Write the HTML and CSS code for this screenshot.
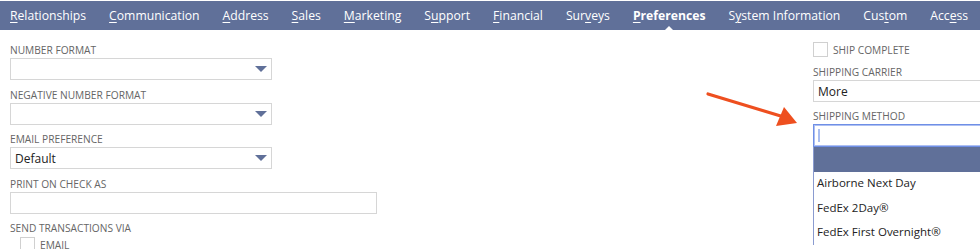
FILE: index.html
```html
<!DOCTYPE html>
<html>
<head>
<meta charset="utf-8">
<link rel="stylesheet" href="styles.css">
</head>
<body>
<nav class="tabs">
  <span class="tab"><u>R</u>elationships</span>
  <span class="tab"><u>C</u>ommunication</span>
  <span class="tab"><u>A</u>ddress</span>
  <span class="tab"><u>S</u>ales</span>
  <span class="tab"><u>M</u>arketing</span>
  <span class="tab">S<u>u</u>pport</span>
  <span class="tab"><u>F</u>inancial</span>
  <span class="tab">Sur<u>v</u>eys</span>
  <span class="tab active"><u>P</u>references</span>
  <span class="tab">S<u>y</u>stem Information</span>
  <span class="tab">Cus<u>t</u>om</span>
  <span class="tab">Acc<u>e</u>ss</span>
</nav>
<main class="content">
  <section class="col-left">
    <div class="field">
      <div class="label">NUMBER FORMAT</div>
      <div class="select"><span class="value"></span><span class="caret"></span></div>
    </div>
    <div class="field">
      <div class="label">NEGATIVE NUMBER FORMAT</div>
      <div class="select"><span class="value"></span><span class="caret"></span></div>
    </div>
    <div class="field">
      <div class="label">EMAIL PREFERENCE</div>
      <div class="select"><span class="value">Default</span><span class="caret"></span></div>
    </div>
    <div class="field">
      <div class="label">PRINT ON CHECK AS</div>
      <div class="textbox"></div>
    </div>
    <div class="field">
      <div class="label">SEND TRANSACTIONS VIA</div>
      <div class="check-row indent"><span class="checkbox"></span><span class="label">EMAIL</span></div>
    </div>
  </section>
  <section class="col-right">
    <div class="check-row"><span class="checkbox"></span><span class="label">SHIP COMPLETE</span></div>
    <div class="field rfield">
      <div class="label">SHIPPING CARRIER</div>
      <div class="select wide"><span class="value">More</span></div>
    </div>
    <div class="field rfield2">
      <div class="label">SHIPPING METHOD</div>
      <div class="input-focus"><span class="cursor"></span></div>
      <div class="dropdown">
        <div class="dd-head"></div>
        <div class="dd-item first">Airborne Next Day</div>
        <div class="dd-item">FedEx 2Day®</div>
        <div class="dd-item">FedEx First Overnight®</div>
      </div>
    </div>
  </section>
  <svg class="arrow" width="100" height="40" viewBox="0 0 100 40">
    <line x1="2" y1="5" x2="78" y2="28" stroke="#ee4f1f" stroke-width="3.2" stroke-linecap="round"/>
    <polygon points="91,34 70,37 78,18" fill="#ee4f1f"/>
  </svg>
</main>
</body>
</html>
```
FILE: styles.css
```css
html, body {
  margin: 0;
  padding: 0;
  background: #fff;
  overflow: hidden;
  width: 980px;
  height: 249px;
  font-family: "Open Sans", "Liberation Sans", sans-serif;
}
.tabs {
  display: flex;
  align-items: center;
  height: 29px;
  margin-top: 1px;
  background: #607099;
  padding-left: 10px;
  gap: 23px;
  box-sizing: border-box;
  position: relative;
  white-space: nowrap;
}
.tab {
  color: #fff;
  font-size: 12.2px;
  line-height: 29px;
  position: relative;
}
.tab u { text-decoration-thickness: 1px; text-underline-offset: 2px; }
.tab.active { font-weight: 700; }
.tab.active::after {
  content: "";
  position: absolute;
  left: 50%;
  bottom: 0;
  margin-left: -4px;
  border-left: 4px solid transparent;
  border-right: 4px solid transparent;
  border-bottom: 4px solid #fff;
}
.content {
  display: grid;
  grid-template-columns: 803px 300px;
  padding-left: 10px;
  position: relative;
}
.col-left { padding-top: 13px; }
.col-right { padding-top: 12px; }
.field { margin-bottom: 7.5px; }
.label {
  font-size: 10.2px;
  line-height: 14px;
  color: #666;
  margin-bottom: 1px;
}
.select, .textbox {
  box-sizing: border-box;
  height: 22px;
  width: 262px;
  border: 1px solid #d6d6d6;
  display: flex;
  align-items: center;
  justify-content: space-between;
  padding: 0 4px 0 4px;
}
.textbox { width: 367px; }
.select.wide { width: 200px; }
.value {
  font-size: 12px;
  color: #222;
}
.caret {
  width: 0; height: 0;
  border-left: 6px solid transparent;
  border-right: 6px solid transparent;
  border-top: 6px solid #607099;
}
.check-row {
  display: flex;
  align-items: center;
  gap: 5px;
}
.check-row .label { margin: 0; line-height: 14px; }
.indent { margin-left: 10px; margin-top: 2px; }
.checkbox {
  width: 13px; height: 13px;
  border: 1px solid #d0d0d0;
  display: inline-block;
  flex: none;
}
.rfield { margin-top: 8px; margin-bottom: 7px; }
.rfield2 { margin-bottom: 0; }
.input-focus {
  box-sizing: border-box;
  height: 23px;
  width: 200px;
  border: 1px solid #6f8fe6;
  box-shadow: inset 0 0 0 1px #aec0f2;
  display: flex;
  align-items: center;
  padding-left: 4px;
}
.cursor {
  width: 2px; height: 13px;
  background: #a9bdf0;
}
.dropdown {
  width: 200px;
  border-left: 1px solid #8a9bd0;
}
.dd-head {
  height: 25px;
  background: #607099;
}
.dd-item {
  font-size: 11.5px;
  line-height: 24.5px;
  color: #222;
  padding-left: 3px;
}
.dd-item.first { margin-top: -1px; }
.arrow {
  position: absolute;
  left: 706px;
  top: 59px;
}
```
